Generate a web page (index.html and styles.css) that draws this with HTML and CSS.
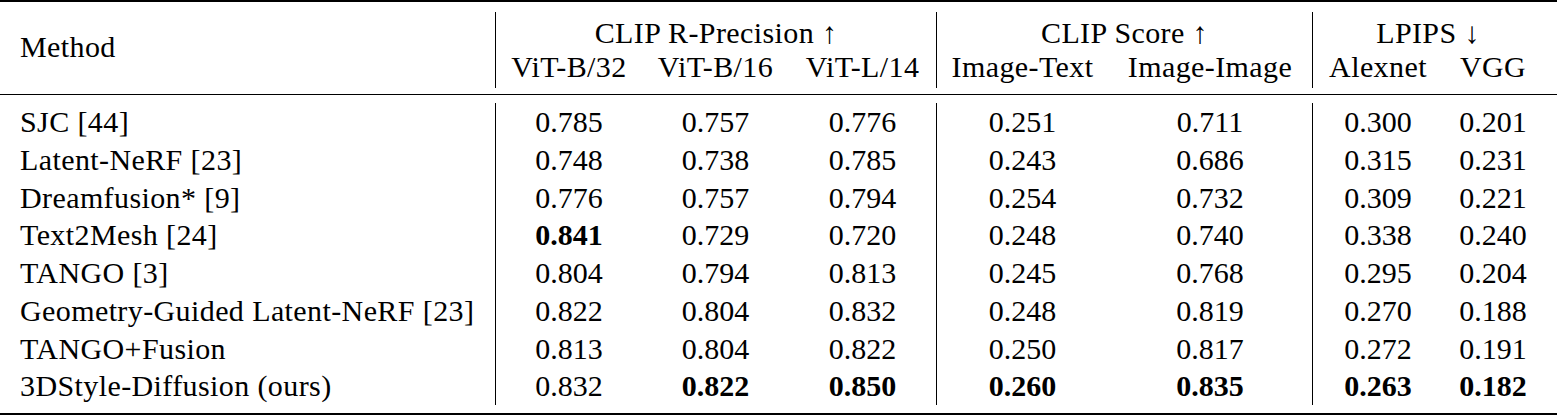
FILE: index.html
```html
<!DOCTYPE html>
<html>
<head>
<meta charset="utf-8">
<link rel="stylesheet" href="styles.css">
</head>
<body>
<div class="table">
  <div class="head">
    <div class="method">Method</div>
    <div class="grp sep g-rp">CLIP R-Precision ↑</div>
    <div class="grp sep g-cs">CLIP Score ↑</div>
    <div class="grp sep g-lp">LPIPS ↓</div>
    <div class="sub sep">ViT-B/32</div>
    <div class="sub">ViT-B/16</div>
    <div class="sub">ViT-L/14</div>
    <div class="sub sep">Image-Text</div>
    <div class="sub">Image-Image</div>
    <div class="sub sep">Alexnet</div>
    <div class="sub last">VGG</div>
  </div>
  <div class="body">
    <div class="name">SJC [44]</div><div class="num sep">0.785</div><div class="num">0.757</div><div class="num">0.776</div><div class="num sep">0.251</div><div class="num">0.711</div><div class="num sep">0.300</div><div class="num last">0.201</div>
    <div class="name">Latent-NeRF [23]</div><div class="num sep">0.748</div><div class="num">0.738</div><div class="num">0.785</div><div class="num sep">0.243</div><div class="num">0.686</div><div class="num sep">0.315</div><div class="num last">0.231</div>
    <div class="name">Dreamfusion* [9]</div><div class="num sep">0.776</div><div class="num">0.757</div><div class="num">0.794</div><div class="num sep">0.254</div><div class="num">0.732</div><div class="num sep">0.309</div><div class="num last">0.221</div>
    <div class="name">Text2Mesh [24]</div><div class="num sep"><b>0.841</b></div><div class="num">0.729</div><div class="num">0.720</div><div class="num sep">0.248</div><div class="num">0.740</div><div class="num sep">0.338</div><div class="num last">0.240</div>
    <div class="name">TANGO [3]</div><div class="num sep">0.804</div><div class="num">0.794</div><div class="num">0.813</div><div class="num sep">0.245</div><div class="num">0.768</div><div class="num sep">0.295</div><div class="num last">0.204</div>
    <div class="name">Geometry-Guided Latent-NeRF [23]</div><div class="num sep">0.822</div><div class="num">0.804</div><div class="num">0.832</div><div class="num sep">0.248</div><div class="num">0.819</div><div class="num sep">0.270</div><div class="num last">0.188</div>
    <div class="name">TANGO+Fusion</div><div class="num sep">0.813</div><div class="num">0.804</div><div class="num">0.822</div><div class="num sep">0.250</div><div class="num">0.817</div><div class="num sep">0.272</div><div class="num last">0.191</div>
    <div class="name">3DStyle-Diffusion (ours)</div><div class="num sep">0.832</div><div class="num"><b>0.822</b></div><div class="num"><b>0.850</b></div><div class="num sep"><b>0.260</b></div><div class="num"><b>0.835</b></div><div class="num sep"><b>0.263</b></div><div class="num last"><b>0.182</b></div>
  </div>
</div>
</body>
</html>
```

FILE: styles.css
```css
html, body {
  margin: 0;
  padding: 0;
  background: #ffffff;
}

body {
  font-family: "Liberation Serif", "DejaVu Serif", serif;
  font-size: 30px;
  color: #000;
}

.table {
  width: 1557px;
  border-top: 2px solid #000;
  border-bottom: 2px solid #000;
}

.head,
.body {
  display: grid;
  grid-template-columns: 495px 147px 147px 147px 172px 204px 131px 114px;
}

.head {
  grid-template-rows: 38px 38px;
  padding: 10px 0 6px;
  border-bottom: 1px solid #000;
  letter-spacing: 0.4px;
}

.body {
  grid-auto-rows: 37.75px;
  padding: 8px 0 8px;
}

.sep {
  border-left: 1px solid #000;
}

.method {
  grid-row: 1 / span 2;
  grid-column: 1;
  align-self: center;
  padding-left: 20px;
  padding-bottom: 6px;
}

.grp {
  grid-row: 1;
  text-align: center;
  line-height: 34px;
  padding-top: 4px;
}

.g-rp { grid-column: 2 / span 3; }
.g-cs { grid-column: 5 / span 2; }
.g-lp { grid-column: 7 / span 2; padding-right: 14px; }

.sub {
  grid-row: 2;
  text-align: center;
  line-height: 34px;
}

.name {
  padding-left: 20px;
  line-height: 37.75px;
  white-space: nowrap;
  letter-spacing: 0.4px;
}

.num {
  text-align: center;
  line-height: 37.75px;
}

.last {
  padding-right: 14px;
}

b {
  font-weight: bold;
}
```
